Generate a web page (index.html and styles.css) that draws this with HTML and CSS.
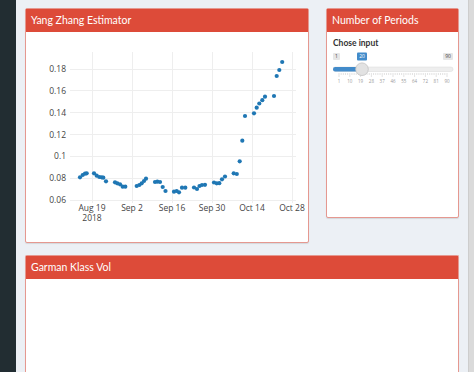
FILE: index.html
```html
<!DOCTYPE html>
<html>
  <head>
    <title>Volatility Dashboard</title>
    <link rel="stylesheet" href="styles.css">
  </head>
  <body>
    <div class="page">
      <aside class="sidebar"></aside>
      <main class="content">
        <div class="row">
          <section class="box box-wide">
            <div class="box-header">Yang Zhang Estimator</div>
            <div class="box-body chart-body">
              <svg class="chart" width="282" height="210">
                <g transform="translate(-26 -32)">
                  <g class="grid">
                    <line x1="70" x2="296" y1="69.5" y2="69.5" />
                    <line x1="70" x2="296" y1="90.5" y2="90.5" />
                    <line x1="70" x2="296" y1="112.5" y2="112.5" />
                    <line x1="70" x2="296" y1="134.5" y2="134.5" />
                    <line x1="70" x2="296" y1="156.5" y2="156.5" />
                    <line x1="70" x2="296" y1="178.5" y2="178.5" />
                    <line x1="70" x2="296" y1="200.5" y2="200.5" />
                    <line x1="92.5" x2="92.5" y1="52" y2="203" />
                    <line x1="132.5" x2="132.5" y1="52" y2="203" />
                    <line x1="172.5" x2="172.5" y1="52" y2="203" />
                    <line x1="212.5" x2="212.5" y1="52" y2="203" />
                    <line x1="252.5" x2="252.5" y1="52" y2="203" />
                    <line x1="292.5" x2="292.5" y1="52" y2="203" />
                  </g>
                  <g class="ticks y-ticks">
                    <text x="66" y="72">0.18</text>
                    <text x="66" y="93.5">0.16</text>
                    <text x="66" y="115.5">0.14</text>
                    <text x="66" y="137.5">0.12</text>
                    <text x="66" y="159">0.1</text>
                    <text x="66" y="181">0.08</text>
                    <text x="66" y="203">0.06</text>
                  </g>
                  <g class="ticks x-ticks">
                    <text x="92" y="210.5">Aug 19</text>
                    <text x="92" y="220.5">2018</text>
                    <text x="132" y="210.5">Sep 2</text>
                    <text x="172" y="210.5">Sep 16</text>
                    <text x="212" y="210.5">Sep 30</text>
                    <text x="252" y="210.5">Oct 14</text>
                    <text x="292" y="210.5">Oct 28</text>
                  </g>
                  <g class="points" id="points"></g>
                </g>
              </svg>
            </div>
          </section>

          <section class="box box-narrow">
            <div class="box-header">Number of Periods</div>
            <div class="box-body input-body">
              <label class="control-label">Chose input</label>
              <svg class="slider" width="122" height="36">
                <g transform="translate(-333 -49)">
                  <rect class="irs-min" x="333" y="53" width="7" height="7" rx="1" />
                  <text class="irs-label" x="336.5" y="58.2">1</text>
                  <rect class="irs-max" x="443" y="53" width="10" height="7" rx="1" />
                  <text class="irs-label" x="448" y="58.2">90</text>
                  <rect class="irs-single" x="357" y="52.5" width="10" height="8" rx="1" />
                  <text class="irs-label irs-single-text" x="362" y="58.3">20</text>
                  <rect class="irs-line" x="333" y="67" width="120" height="4.5" rx="2.2" />
                  <rect class="irs-bar" x="333" y="67" width="29" height="4.5" rx="2.2" />
                  <g class="irs-grid" id="grid"></g>
                  <circle class="irs-handle" cx="362" cy="69.2" r="6.3" />
                </g>
              </svg>
            </div>
          </section>
        </div>

        <section class="box box-full">
          <div class="box-header">Garman Klass Vol</div>
          <div class="box-body empty-body"></div>
        </section>
      </main>
      <div class="scrollbar"></div>
    </div>

    <script>
      const ns = "http://www.w3.org/2000/svg";

      const points = [
        [80, 177.3], [82.7, 175], [85, 173.7], [86.7, 173.3], [94, 173.3],
        [96.7, 175.7], [99.3, 177], [101.7, 177.3], [103.3, 177.7], [106, 181.3],
        [115, 182.3], [117.3, 183.3], [120, 184.3], [122.7, 186.7], [125.3, 186.7],
        [136.7, 186], [139.3, 185], [141.7, 183.3], [144, 181], [146, 178.7],
        [155, 182], [157.3, 181.7], [160, 182], [162.7, 187], [165.5, 191],
        [174, 191.7], [176.7, 191], [179, 192.3], [182, 187.7], [185.3, 187.7],
        [194, 187.5], [197, 189], [199.5, 186], [202, 185], [205, 184.8],
        [214, 182.5], [216.7, 183.3], [219.3, 183.2], [222, 179.3], [225, 176.5],
        [233.7, 173.3], [236.8, 174], [239.7, 161.3], [242.3, 140.7], [245, 116],
        [254, 113.3], [256.7, 107.7], [259.3, 103.5], [262.3, 100.2], [265, 96.7],
        [274, 96], [276.7, 76], [279.3, 70], [282.2, 62]
      ];

      const pointGroup = document.getElementById("points");
      points.forEach(function (p) {
        const c = document.createElementNS(ns, "circle");
        c.setAttribute("cx", p[0]);
        c.setAttribute("cy", p[1]);
        c.setAttribute("r", 2.1);
        pointGroup.appendChild(c);
      });

      // slider grid: 11 labels, 4 small ticks between each
      const grid = document.getElementById("grid");
      const labels = [1, 10, 19, 28, 37, 46, 55, 64, 72, 81, 90];
      const left = 339;
      const step = 10.8;
      labels.forEach(function (value, i) {
        const x = left + i * step;
        const tick = document.createElementNS(ns, "line");
        tick.setAttribute("x1", x);
        tick.setAttribute("x2", x);
        tick.setAttribute("y1", 73);
        tick.setAttribute("y2", 77);
        grid.appendChild(tick);

        const text = document.createElementNS(ns, "text");
        text.setAttribute("x", x);
        text.setAttribute("y", 82.5);
        text.textContent = value;
        grid.appendChild(text);

        if (i < labels.length - 1) {
          for (let k = 1; k < 5; k++) {
            const small = document.createElementNS(ns, "line");
            const sx = x + (k * step) / 5;
            small.setAttribute("x1", sx);
            small.setAttribute("x2", sx);
            small.setAttribute("y1", 73);
            small.setAttribute("y2", 75);
            grid.appendChild(small);
          }
        }
      });
    </script>
  </body>
</html>
```

FILE: styles.css
```css
body {
  margin: 0;
  height: 372px;
  overflow: hidden;
  font-family: Lato, "Open Sans", sans-serif;
}

.page {
  display: flex;
  height: 372px;
}

.sidebar {
  width: 16px;
  background-color: #222d32;
}

.content {
  flex: 1;
  display: flex;
  flex-direction: column;
  background-color: #ecf0f5;
  padding: 8px 9px 0 9px;
}

.scrollbar {
  width: 5px;
  background-color: #dadada;
  border-left: 1px solid #cdcdcd;
}

.row {
  display: flex;
  gap: 17px;
  align-items: flex-start;
  margin-bottom: 12px;
}

.box {
  background-color: white;
  border: 1px solid #e59890;
  border-radius: 2px;
  box-shadow: 0 1px 1px rgba(0, 0, 0, 0.1);
}

.box-wide {
  width: 284px;
  box-sizing: border-box;
}

.box-narrow {
  width: 133px;
  box-sizing: border-box;
}

.box-header {
  background-color: #dd4b39;
  color: white;
  font-size: 10.5px;
  height: 23px;
  line-height: 22px;
  padding: 0 5px;
}

.chart-body {
  height: 210px;
}

.chart {
  display: block;
}

.grid line {
  stroke: #eeeeee;
  stroke-width: 1;
}

.ticks text {
  font-family: "Open Sans", sans-serif;
  font-size: 8.5px;
  fill: #444444;
}

.y-ticks text {
  text-anchor: end;
}

.x-ticks text {
  text-anchor: middle;
}

.points circle {
  fill: #1f77b4;
}

.input-body {
  height: 185px;
  box-sizing: border-box;
  padding: 6px 5px 0 6px;
}

.control-label {
  display: block;
  font-size: 8.5px;
  font-weight: bold;
  line-height: 11px;
  color: #333333;
}

.slider {
  display: block;
}

.irs-min,
.irs-max {
  fill: #e6e6e6;
}

.irs-single {
  fill: #428bca;
}

.irs-label {
  font-family: "Open Sans", sans-serif;
  font-size: 5px;
  fill: #444444;
  text-anchor: middle;
}

.irs-single-text {
  fill: white;
}

.irs-line {
  fill: #eeeeee;
  stroke: #d8d8d8;
  stroke-width: 0.5;
}

.irs-bar {
  fill: #428bca;
}

.irs-handle {
  fill: #e2e2e2;
  stroke: #c2c2c2;
  stroke-width: 0.8;
}

.irs-grid line {
  stroke: #cfcfcf;
  stroke-width: 0.6;
}

.irs-grid text {
  font-family: "Open Sans", sans-serif;
  font-size: 4.5px;
  fill: #999999;
  text-anchor: middle;
}

.box-full {
  flex: 1;
  display: flex;
  flex-direction: column;
  border-bottom: none;
  border-radius: 2px 2px 0 0;
  min-height: 0;
}

.empty-body {
  flex: 1;
}
```
